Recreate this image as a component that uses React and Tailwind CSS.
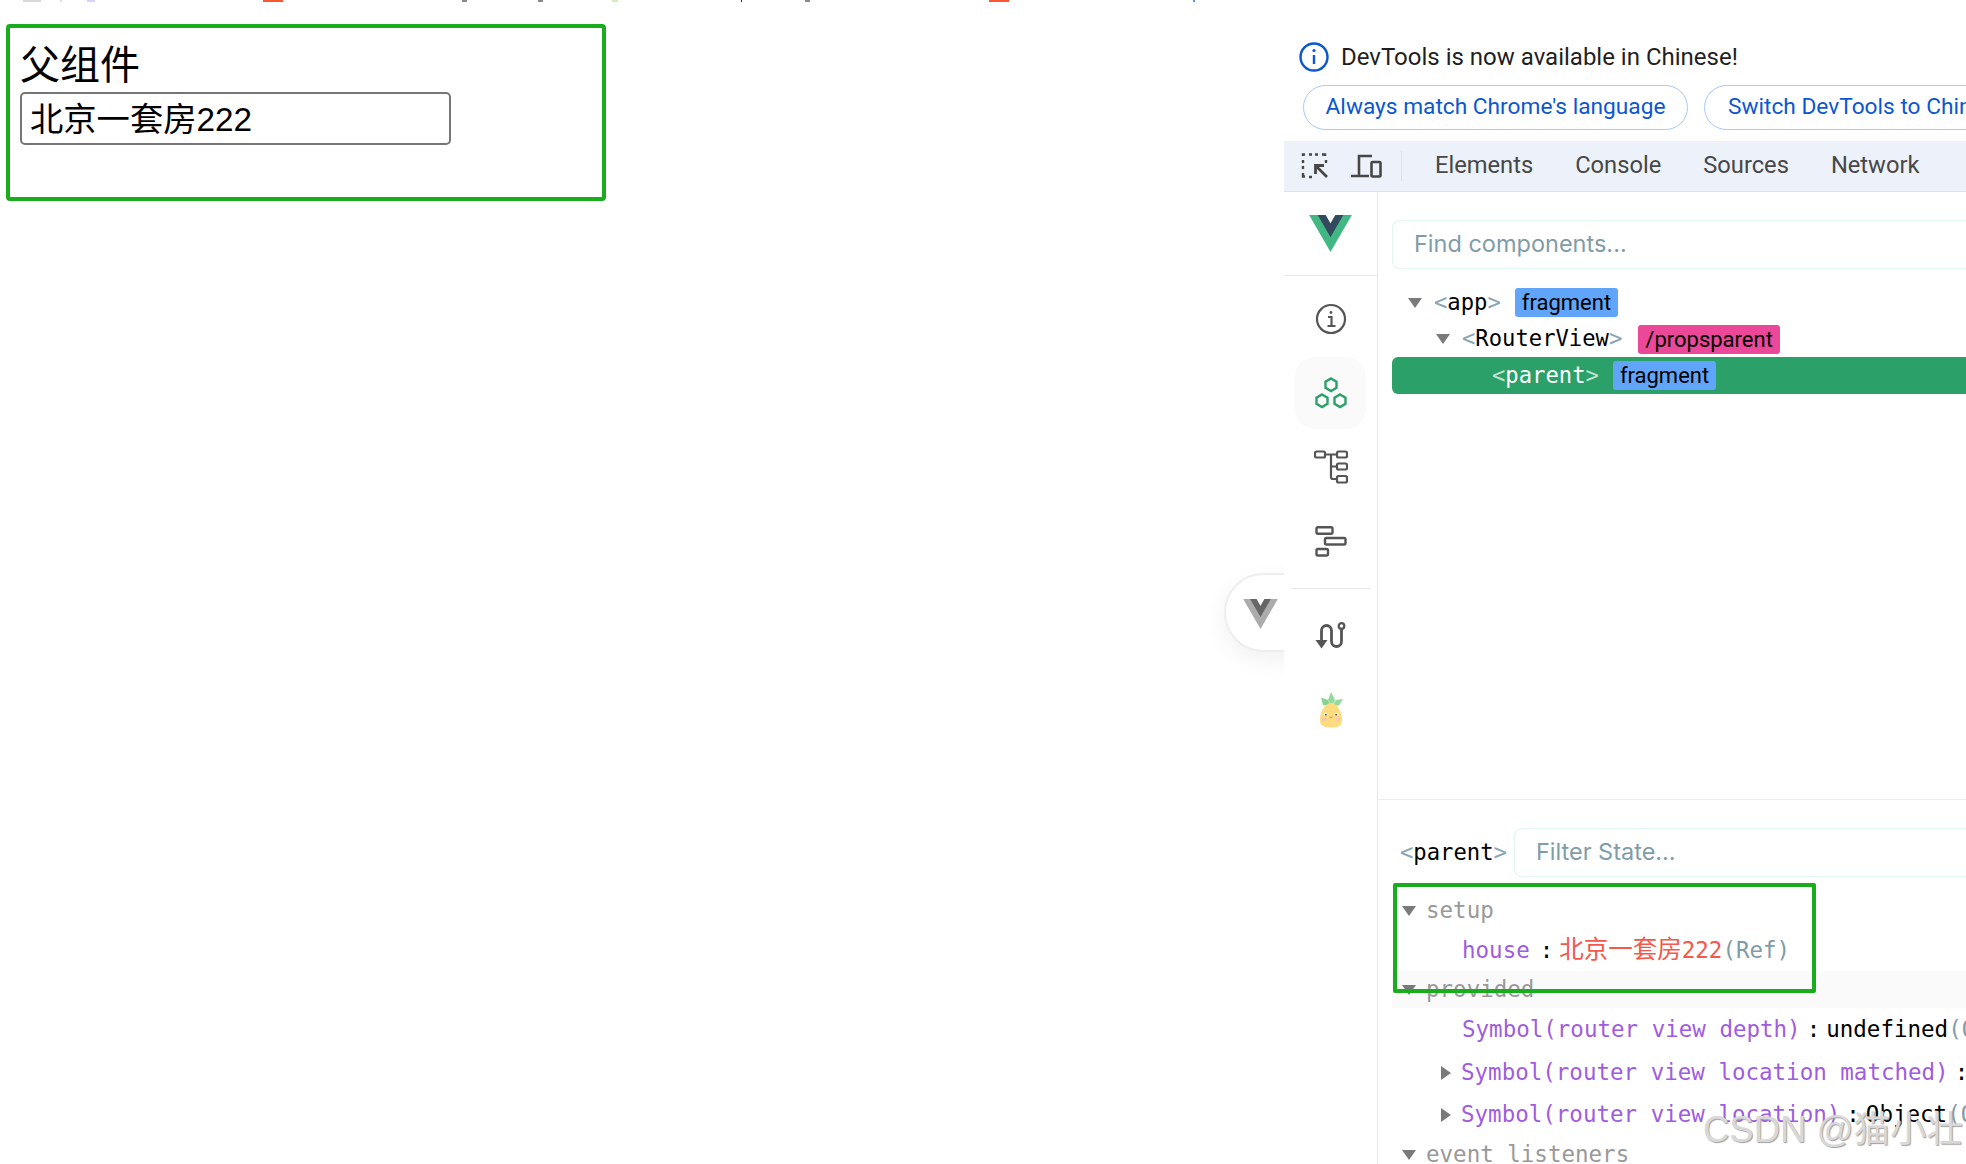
import React from "react";

const sans = "font-['Roboto','Noto_Sans_CJK_SC',sans-serif]";
const mono = "font-['DejaVu_Sans_Mono','Noto_Sans_CJK_SC',monospace]";
const inter = "font-['Inter','Noto_Sans_CJK_SC',sans-serif]";

const VueLogo = ({ className, outer = "#41b883", inner = "#34495e" }) => (
  <svg viewBox="0 0 261.76 226.69" className={className}>
    <path d="M161.096.001l-30.225 52.351L100.647.001H-.005l130.877 226.688L261.749.001z" fill={outer} />
    <path d="M161.096.001l-30.225 52.351L100.647.001H52.346l78.526 136.01L209.398.001z" fill={inner} />
  </svg>
);

const InfoIcon = () => (
  <svg width="32" height="32" viewBox="0 0 32 32" fill="none" stroke="#555" strokeWidth="2.200">
    <circle cx="16" cy="16" r="14" />
    <circle cx="16" cy="9.500" r="1.400" fill="#555" stroke="none" />
    <path d="M13 14h3.500v9M12.500 23h8" />
  </svg>
);

const HexIcon = () => (
  <svg width="32" height="32" viewBox="0 0 32 32" fill="none" stroke="#2ba069" strokeWidth="2.400">
    <path d="M16 1.500l5.500 3.200v6.200L16 14.100l-5.500-3.200V4.700z" />
    <path d="M7 17.500l5.500 3.200v6.200L7 30.100l-5.500-3.200v-6.200z" />
    <path d="M25 17.500l5.500 3.200v6.200L25 30.100l-5.500-3.200v-6.200z" />
  </svg>
);

const TreeIcon = () => (
  <svg width="34" height="34" viewBox="0 0 34 34" fill="none" stroke="#555" strokeWidth="2.200">
    <rect x="1" y="1.500" width="10" height="6" rx="1.500" />
    <rect x="23" y="1.500" width="10" height="6" rx="1.500" />
    <rect x="23" y="13.500" width="10" height="6" rx="1.500" />
    <rect x="23" y="26" width="10" height="6.500" rx="1.500" />
    <path d="M11 4.500h12M17 4.500V27q0 2 2 2h4M17 16.500h6" />
  </svg>
);

const TimelineIcon = () => (
  <svg width="32" height="31" viewBox="0 0 32 31" fill="none" stroke="#555" strokeWidth="2.400">
    <rect x="1.500" y="1.200" width="16" height="6.500" rx="1.500" />
    <rect x="10" y="12" width="20.500" height="6.500" rx="1.500" />
    <rect x="1.500" y="23" width="11.500" height="6.500" rx="1.500" />
  </svg>
);

const RouteIcon = () => (
  <svg width="32" height="29" viewBox="0 0 32 29" fill="none" stroke="#555" strokeWidth="2.800">
    <path d="M6.500 19V8.500a5 5 0 0 1 10 0v11a5 5 0 0 0 10 0V7" />
    <circle cx="26.500" cy="4" r="2.800" strokeWidth="2.200" />
    <path d="M0.500 18h12l-6 8.500z" fill="#555" stroke="none" />
  </svg>
);

const Pineapple = () => (
  <svg width="26" height="36" viewBox="0 0 26 36">
    <path d="M13 0l4 8-3 6-4-6z" fill="#93d99a" />
    <path d="M3 5.500l7 2.500 3 6-8-1z" fill="#86d28f" />
    <path d="M25 7l-7 1-4 6 7-.5z" fill="#93d99a" />
    <path d="M13 11c6 0 11 8 11 17 0 6-4 7.500-11 7.500S2 34 2 28c0-9 5-17 11-17z" fill="#fddc80" />
    <circle cx="7.500" cy="22.500" r="1.700" fill="#fff" />
    <circle cx="18.500" cy="22.500" r="1.700" fill="#fff" />
    <circle cx="7.800" cy="22.800" r="1" fill="#555" />
    <circle cx="18.200" cy="22.800" r="1" fill="#555" />
    <circle cx="6" cy="27" r="2.300" fill="#f7c4b0" opacity="0.8" />
    <circle cx="20" cy="27" r="2.300" fill="#f7c4b0" opacity="0.8" />
    <path d="M11.500 25q.8 1.200 1.500 0q.8 1.200 1.500 0" fill="none" stroke="#666" strokeWidth="0.700" />
  </svg>
);

const InspectIcon = () => (
  <svg width="28" height="26" viewBox="0 0 28 26" fill="none" stroke="#474747" strokeWidth="2.400">
    <path d="M2 3V1.500h2M8 1.500h3M14 1.500h3M21 1.500h3v1.500M25 7v3M2 7v3M2 13v3M2 20v3.500h2M8 24h3" />
    <path d="M26 24L15 13M14.500 21v-8.500h8.500" strokeWidth="2.800" />
  </svg>
);

const DeviceIcon = () => (
  <svg width="31" height="24" viewBox="0 0 31 24" fill="none" stroke="#474747" strokeWidth="2.600">
    <path d="M21 2H8v20M0 22h18" />
    <rect x="20.500" y="8" width="9" height="14.500" rx="1" />
  </svg>
);

const Arrow = ({ open }) =>
  open ? (
    <span className="w-0 h-0 border-x-[7px] border-x-transparent border-t-[10px] border-t-[#7a7a7a]" />
  ) : (
    <span className="w-0 h-0 border-y-[7px] border-y-transparent border-l-[10px] border-l-[#7a7a7a]" />
  );

const Badge = ({ children, color }) => (
  <span className={`${sans} h-[29px] px-[7px] flex items-center rounded-[3px] text-[22px] text-black ${color}`}>
    {children}
  </span>
);

const Tag = ({ name, light }) => (
  <span className={`${mono} text-[22.200px] ${light ? "text-white" : "text-black"}`}>
    <span className={light ? "text-[#bfe3d0]" : "text-[#86a5b5]"}>&lt;</span>
    {name}
    <span className={light ? "text-[#bfe3d0]" : "text-[#86a5b5]"}>&gt;</span>
  </span>
);

const SideItem = ({ children, active }) => (
  <div className={`w-[71px] h-[72px] flex items-center justify-center rounded-[20px] ${active ? "bg-[#fafafa]" : ""}`}>
    {children}
  </div>
);

export default function App() {
  return (
    <div className={`${sans} w-[1966px] h-[1164px] flex bg-white overflow-hidden`}>
      {/* page */}
      <div className="w-[1284px] shrink-0 relative">
        <div className="flex h-[2px]">
          <span className="ml-[23px] w-[18px] bg-[#d8d8d8]" />
          <span className="ml-[19px] w-[2px] bg-[#d5dcff]" />
          <span className="ml-[25px] w-[8px] bg-[#d5d0ff]" />
          <span className="ml-[168px] w-[20px] bg-[#fb5531]" />
          <span className="ml-[179px] w-[5px] bg-[#8a8a8a]" />
          <span className="ml-[71px] w-[5px] bg-[#8a8a8a]" />
          <span className="ml-[69px] w-[6px] bg-[#d5ecc0]" />
          <span className="ml-[123px] w-[1px] bg-[#333366]" />
          <span className="ml-[63px] w-[5px] bg-[#8a8a8a]" />
          <span className="ml-[179px] w-[20px] bg-[#fb5531]" />
          <span className="ml-[184px] w-[2px] bg-[#4a9be8]" />
        </div>
        <div className="ml-[6px] mt-[22px] w-[600px] h-[177px] border-4 border-[#19ac1c] rounded-[4px] pl-[10px] pt-[10px] font-['Liberation_Sans','Noto_Sans_CJK_SC',sans-serif]">
          <div className="text-[40px] leading-[54px] text-black">父组件</div>
          <div className="w-[431px] h-[53px] border-2 border-[#767676] rounded-[5px] pl-[8px] pt-[2px] flex items-center text-[33.300px] text-black">
            北京一套房222
          </div>
        </div>
        {/* floating vue devtools button */}
        <div className="absolute left-[1224px] top-[573px] w-[110px] h-[79px] rounded-full bg-white border-2 border-[#eeeeee] shadow-[0_8px_24px_rgba(0,0,0,0.06)] pl-[17px] pt-[24px]">
          <VueLogo className="w-[35px] h-[30px]" outer="#acacac" inner="#666666" />
        </div>
      </div>

      {/* devtools */}
      <div className="relative flex-1 min-w-0 flex flex-col bg-white">
        <div className="h-[141px] shrink-0 overflow-hidden">
          <div className="h-[85px] pl-[15px] pt-[42px] flex items-start gap-[12px] whitespace-nowrap">
            <svg width="30" height="30" viewBox="0 0 30 30" fill="none" stroke="#0b57d0" strokeWidth="2.400" className="shrink-0">
              <circle cx="15" cy="15" r="13.500" />
              <path d="M15 13v9" />
              <circle cx="15" cy="8.500" r="1.600" fill="#0b57d0" stroke="none" />
            </svg>
            <span className="text-[24px] leading-[30px] text-[#1f1f1f]">DevTools is now available in Chinese!</span>
          </div>
          <div className="flex gap-[16px] pl-[19px] whitespace-nowrap">
            <div className="w-[385px] h-[45px] shrink-0 rounded-full border border-[#a8c7fa] flex items-center justify-center text-[22.700px] text-[#0b57d0]">
              Always match Chrome's language
            </div>
            <div className="h-[45px] shrink-0 rounded-full border border-[#a8c7fa] pl-[23px] pr-[23px] flex items-center text-[22.700px] text-[#0b57d0]">
              Switch DevTools to Chinese
            </div>
          </div>
        </div>

        <div className="h-[51px] shrink-0 bg-[#edf2fa] border-b border-[#d3e3fd] flex items-center pl-[17px] whitespace-nowrap">
          <InspectIcon />
          <span className="ml-[22px]"><DeviceIcon /></span>
          <span className="ml-[19px] w-[1px] h-[30px] bg-[#d3e3fd]" />
          <div className="ml-[33px] flex gap-[42px] text-[23.700px] text-[#474747]">
            <span>Elements</span>
            <span>Console</span>
            <span>Sources</span>
            <span>Network</span>
          </div>
        </div>

        <div className="flex-1 min-h-0 flex">
          {/* sidebar */}
          <div className="w-[94px] shrink-0 border-r border-[#e8e8e8]">
            <div className="h-[84px] border-b border-[#e8e8e8] pl-[25px] pt-[23px]">
              <VueLogo className="w-[43px] h-[37px]" />
            </div>
            <div className="pl-[11px] pt-[7px] flex flex-col gap-[2px]">
              <SideItem><InfoIcon /></SideItem>
              <SideItem active><HexIcon /></SideItem>
              <SideItem><TreeIcon /></SideItem>
              <SideItem><TimelineIcon /></SideItem>
              <div className="-ml-[4px] w-[79px] h-[1px] my-[9px] bg-[#e8e8e8]" />
              <SideItem><RouteIcon /></SideItem>
              <SideItem><Pineapple /></SideItem>
            </div>
          </div>

          {/* main */}
          <div className="relative flex-1 min-w-0 flex flex-col overflow-hidden">
            <div className="h-[607px] shrink-0 pt-[28px] pl-[14px]">
              <div className={`${inter} w-[620px] h-[49px] rounded-l-[8px] border-y border-l border-[#e0f5f0] pl-[21px] pb-[2px] flex items-center text-[23.500px] text-[#7f9ca8]`}>
                Find components...
              </div>
              <div className="mt-[16px] h-[36px] pl-[16px] flex items-center whitespace-nowrap">
                <Arrow open />
                <span className="ml-[12px]"><Tag name="app" /></span>
                <span className="ml-[14px] -mt-[2px]"><Badge color="bg-[#60a5fa]">fragment</Badge></span>
              </div>
              <div className="h-[36px] pl-[44px] flex items-center whitespace-nowrap">
                <Arrow open />
                <span className="ml-[12px]"><Tag name="RouterView" /></span>
                <span className="ml-[16px]"><Badge color="bg-[#ec4899]">/propsparent</Badge></span>
              </div>
              <div className="h-[37px] pl-[100px] flex items-center whitespace-nowrap bg-[#2ba069] rounded-l-[6px]">
                <Tag name="parent" light />
                <span className="ml-[14px]"><Badge color="bg-[#60a5fa]">fragment</Badge></span>
              </div>
            </div>

            <div className="h-[1px] shrink-0 bg-[#eeeeee]" />

            <div className={`${mono} relative flex-1 min-h-0 text-[22.500px] whitespace-nowrap`}>
              <div className="pt-[28px] pl-[22px] flex items-center h-[77px]">
                <Tag name="parent" />
                <div className={`${inter} ml-[7px] flex-1 h-[49px] rounded-l-[8px] border-y border-l border-[#e0f5f0] pl-[21px] pb-[2px] flex items-center text-[23.500px] text-[#7f9ca8]`}>
                  Filter State...
                </div>
              </div>
              <div className="mt-[15px] h-[38px] pl-[24px] flex items-center text-[#999999]">
                <Arrow open />
                <span className="ml-[10px]">setup</span>
              </div>
              <div className="h-[41px] pl-[84px] flex items-center">
                <span className="text-[#a05ce0]">house</span>
                <span className="ml-[10px] text-black">:</span>
                <span className="ml-[6px] text-[#f4574b]"><span className="text-[24.500px]">北京一套房</span>222</span>
                <span className="text-[#7f9ca8]">(Ref)</span>
              </div>
              <div className="h-[37px] ml-[14px] pl-[10px] flex items-center bg-[#fafafa] text-[#999999]">
                <Arrow open />
                <span className="ml-[10px]">provided</span>
              </div>
              <div className="h-[43px] pl-[84px] flex items-center">
                <span className="text-[#a05ce0]">Symbol(router view depth)</span>
                <span className="ml-[6px] text-black">:</span>
                <span className="ml-[6px] text-black">undefined</span>
                <span className="text-[#7f9ca8]">(Object)</span>
              </div>
              <div className="h-[43px] pl-[63px] flex items-center">
                <Arrow />
                <span className="ml-[10px] text-[#a05ce0]">Symbol(router view location matched)</span>
                <span className="ml-[6px] text-black">:</span>
                <span className="ml-[6px] text-black">Array</span>
              </div>
              <div className="h-[42px] pl-[63px] flex items-center">
                <Arrow />
                <span className="ml-[10px] text-[#a05ce0]">Symbol(router view location)</span>
                <span className="ml-[6px] text-black">:</span>
                <span className="ml-[6px] text-black">Object</span>
                <span className="text-[#7f9ca8]">(Object)</span>
              </div>
              <div className="h-[38px] pl-[24px] flex items-center text-[#999999]">
                <Arrow open />
                <span className="ml-[10px]">event listeners</span>
              </div>

              {/* annotation box */}
              <div className="absolute left-[15px] top-[83px] w-[423px] h-[110px] border-4 border-[#19ac1c] rounded-[2px]" />
              {/* watermark */}
              <div className="absolute left-[325px] top-[308px] text-[36.500px] leading-[44px] font-['Liberation_Sans','Noto_Sans_CJK_SC',sans-serif] text-[#d8d8d8] [text-shadow:1px_1px_1px_#a0a0a0]">
                CSDN @猫小壮
              </div>
            </div>
          </div>
        </div>
      </div>
    </div>
  );
}
